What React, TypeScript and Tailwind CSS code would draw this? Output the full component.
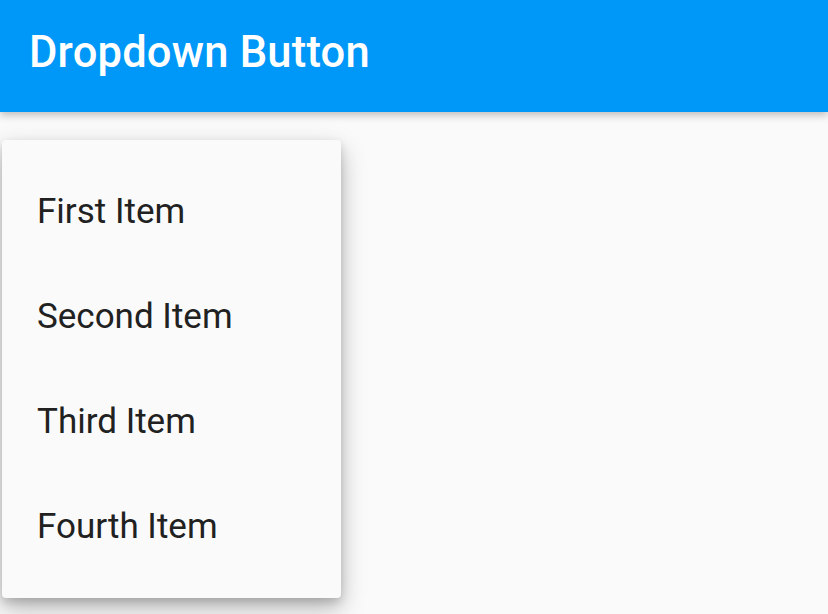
export default function App() {
  const items = ["First Item", "Second Item", "Third Item", "Fourth Item"];
  return (
    <div className="w-[828px] h-[614px] bg-[#fafafa] overflow-hidden relative" style={{ fontFamily: "Roboto, 'Noto Sans', sans-serif" }}>
      <div className="h-[112px] bg-[#0098f8] flex items-center pl-[29px] pb-[6px] shadow-[0_3px_8px_rgba(0,0,0,0.25)] relative z-10">
        <span className="text-white text-[43.5px] font-medium leading-none tracking-[0.2px]">Dropdown Button</span>
      </div>
      <div className="absolute left-[2px] top-[140px] w-[339px] h-[458px] bg-[#fafafa] rounded-[4px] shadow-[0_10px_24px_rgba(0,0,0,0.28),0_4px_8px_rgba(0,0,0,0.14)] pt-[19px] pb-[15px] z-20">
        {items.map((t) => (
          <div key={t} className="h-[105px] flex items-center pl-[35px] text-[35px] text-[#212121] leading-none">
            {t}
          </div>
        ))}
      </div>
    </div>
  );
}
